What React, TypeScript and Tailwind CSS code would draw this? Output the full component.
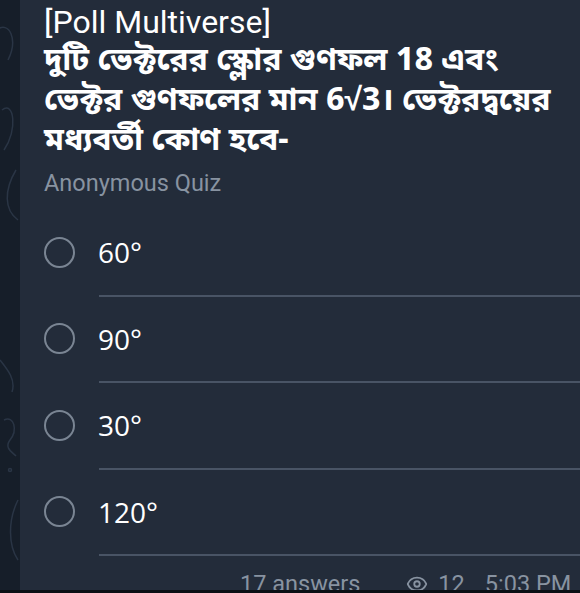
import { Eye } from "lucide-react";

const options = ["60°", "90°", "30°", "120°"];

const questionLines = [
  "দুটি ভেক্টরের স্কেলার গুণফল 18 এবং",
  "ভেক্টর গুণফলের মান 6√3। ভেক্টরদ্বয়ের",
  "মধ্যবর্তী কোণ হবে-",
];

export default function App() {
  return (
    <div className="flex h-[593px] w-[580px] flex-col overflow-hidden bg-[#161e29]" style={{ fontFamily: "Roboto, 'Noto Sans', sans-serif" }}>
      <div className="flex flex-1 overflow-hidden">
        {/* wallpaper strip */}
        <div className="relative w-[20px] shrink-0">
          <svg width="20" height="593" className="absolute left-0 top-0" fill="none" stroke="#2a3545" strokeWidth="1.5">
            <path d="M-4 30 C10 20 18 40 8 60" />
            <path d="M2 110 C14 100 18 130 4 150" />
            <path d="M16 170 C4 190 4 210 18 220" />
            <path d="M0 360 C8 370 16 380 12 392" />
            <path d="M4 420 C14 415 18 430 10 440 C4 448 12 452 16 456" />
            <circle cx="10" cy="470" r="1.5" />
            <path d="M18 500 C8 520 8 545 18 560" />
          </svg>
        </div>

        <div className="flex flex-1 flex-col bg-[#232c3a] pl-[24px] text-white">
          <div className="pt-[2px] text-[32px] leading-[40px]">[Poll Multiverse]</div>
          <div className="whitespace-nowrap text-[32px] font-bold leading-[40px]" style={{ fontFamily: "'Noto Sans Bengali', 'Noto Sans', sans-serif" }}>
            {questionLines.map((l) => (
              <div key={l}>{l}</div>
            ))}
          </div>
          <div className="mt-[5px] text-[23.5px] leading-[32px] text-[#8893a1]">Anonymous Quiz</div>

          <div className="mt-[11px] flex flex-col">
            {options.map((o) => (
              <div key={o} className="flex h-[86.5px] flex-col">
                <div className="flex h-[84.5px] items-center">
                  <div className="h-[31px] w-[31px] shrink-0 rounded-full border-2 border-[#7a8593]" />
                  <div className="ml-[23px] text-[28px] text-white" style={{ fontFamily: "'Open Sans', sans-serif" }}>{o}</div>
                </div>
                <div className="ml-[55px] h-[2px] bg-[#495465]" />
              </div>
            ))}
          </div>

          <div className="mt-[14px] flex items-center text-[23.5px] leading-[28px] text-[#8893a1]">
            <span className="ml-[196px]">17 answers</span>
            <Eye size={22} className="ml-[46px]" />
            <span className="ml-[10px]">12</span>
            <span className="ml-[20px]">5:03 PM</span>
          </div>
        </div>
      </div>
      <div className="h-[3px] shrink-0 bg-[#0b0f14]" />
    </div>
  );
}
